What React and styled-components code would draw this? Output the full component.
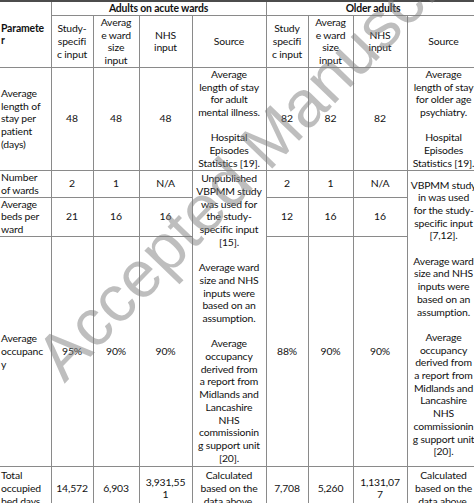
import React from 'react';
import styled, { createGlobalStyle } from 'styled-components';

const GlobalStyle = createGlobalStyle`
  html, body {
    margin: 0;
    padding: 0;
    background: #ffffff;
  }
`;

const Page = styled.div`
  position: relative;
  width: 474px;
  height: 503px;
  overflow: hidden;
  background: #ffffff;
`;

const Table = styled.table`
  width: 480px;
  table-layout: fixed;
  border-collapse: collapse;
  font-family: Lato, 'Liberation Sans', sans-serif;
  font-size: 10.4px;
  letter-spacing: -0.15px;
  line-height: 12.7px;
  color: #111111;
`;

const Row = styled.tr`
  height: ${({ h }) => h}px;
`;

const Cell = styled.td`
  border: 1px solid #8a8a8a;
  padding: 0 1px;
  text-align: ${({ left }) => (left ? 'left' : 'center')};
  vertical-align: middle;
  white-space: nowrap;
  overflow: visible;
  font-weight: ${({ bold }) => (bold ? 700 : 400)};

  &:first-child {
    border-left: none;
  }
`;

const HeadCell = styled(Cell).attrs({ as: 'th' })`
  border-top: 2px solid #4c4c4c;
`;

const SubHead = styled(Cell).attrs({ as: 'th' })`
  font-weight: 400;
`;

const Watermark = styled.div`
  position: absolute;
  left: 262px;
  top: 146px;
  transform: translate(-50%, -50%) rotate(-46deg);
  font-family: 'Liberation Sans', Arial, sans-serif;
  font-size: 66px;
  line-height: 1;
  white-space: nowrap;
  color: rgba(125, 125, 125, 0.5);
  pointer-events: none;
`;

const widths = [51, 42, 46, 53, 74, 42, 45, 54, 73];

const Lines = ({ text }) =>
  text.split('\n').map((line, i, arr) => (
    <React.Fragment key={i}>
      {line === '' ? '\u00a0' : line}
      {i < arr.length - 1 && <br />}
    </React.Fragment>
  ));

const adultSource =
  'Unpublished\nVBPMM study\nwas used for\nthe study-\nspecific input\n[15].\n\nAverage ward\nsize and NHS\ninputs were\nbased on an\nassumption.\n\nAverage\noccupancy\nderived from\na report from\nMidlands and\nLancashire\nNHS\ncommissionin\ng support unit\n[20].';

const olderSource =
  'VBPMM study\nin was used\nfor the study-\nspecific input\n[7,12].\n\nAverage ward\nsize and NHS\ninputs were\nbased on an\nassumption.\n\nAverage\noccupancy\nderived from\na report from\nMidlands and\nLancashire\nNHS\ncommissionin\ng support unit\n[20].';

const App = () => (
  <Page>
    <GlobalStyle />
    <Table>
      <colgroup>
        {widths.map((w, i) => (
          <col key={i} style={{ width: w }} />
        ))}
      </colgroup>
      <thead>
        <Row h={12}>
          <HeadCell left bold rowSpan={2}>
            <Lines text={'Paramete\nr'} />
          </HeadCell>
          <HeadCell bold colSpan={4}>Adults on acute wards</HeadCell>
          <HeadCell bold colSpan={4}>Older adults</HeadCell>
        </Row>
        <Row h={52}>
          <SubHead><Lines text={'Study-\nspecifi\nc input'} /></SubHead>
          <SubHead><Lines text={'Averag\ne ward\nsize\ninput'} /></SubHead>
          <SubHead><Lines text={'NHS\ninput'} /></SubHead>
          <SubHead>Source</SubHead>
          <SubHead><Lines text={'Study\nspecifi\nc input'} /></SubHead>
          <SubHead><Lines text={'Averag\ne ward\nsize\ninput'} /></SubHead>
          <SubHead><Lines text={'NHS\ninput'} /></SubHead>
          <SubHead>Source</SubHead>
        </Row>
      </thead>
      <tbody>
        <Row h={103}>
          <Cell left><Lines text={'Average\nlength of\nstay per\npatient\n(days)'} /></Cell>
          <Cell>48</Cell>
          <Cell>48</Cell>
          <Cell>48</Cell>
          <Cell>
            <Lines text={'Average\nlength of stay\nfor adult\nmental illness.\n\nHospital\nEpisodes\nStatistics [19].'} />
          </Cell>
          <Cell>82</Cell>
          <Cell>82</Cell>
          <Cell>82</Cell>
          <Cell>
            <Lines text={'Average\nlength of stay\nfor older age\npsychiatry.\n\nHospital\nEpisodes\nStatistics [19].'} />
          </Cell>
        </Row>
        <Row h={27}>
          <Cell left><Lines text={'Number\nof wards'} /></Cell>
          <Cell>2</Cell>
          <Cell>1</Cell>
          <Cell>N/A</Cell>
          <Cell rowSpan={3}><Lines text={adultSource} /></Cell>
          <Cell>2</Cell>
          <Cell>1</Cell>
          <Cell>N/A</Cell>
          <Cell rowSpan={3}><Lines text={olderSource} /></Cell>
        </Row>
        <Row h={37}>
          <Cell left><Lines text={'Average\nbeds per\nward'} /></Cell>
          <Cell>21</Cell>
          <Cell>16</Cell>
          <Cell>16</Cell>
          <Cell>12</Cell>
          <Cell>16</Cell>
          <Cell>16</Cell>
        </Row>
        <Row h={230}>
          <Cell left><Lines text={'Average\noccupanc\ny'} /></Cell>
          <Cell>95%</Cell>
          <Cell>90%</Cell>
          <Cell>90%</Cell>
          <Cell>88%</Cell>
          <Cell>90%</Cell>
          <Cell>90%</Cell>
        </Row>
        <Row h={44}>
          <Cell left><Lines text={'Total\noccupied\nbed days'} /></Cell>
          <Cell>14,572</Cell>
          <Cell>6,903</Cell>
          <Cell><Lines text={'3,931,55\n1'} /></Cell>
          <Cell><Lines text={'Calculated\nbased on the\ndata above,'} /></Cell>
          <Cell>7,708</Cell>
          <Cell>5,260</Cell>
          <Cell><Lines text={'1,131,07\n7'} /></Cell>
          <Cell><Lines text={'Calculated\nbased on the\ndata above,'} /></Cell>
        </Row>
      </tbody>
    </Table>
    <Watermark>Accepted Manuscript</Watermark>
  </Page>
);

export default App;
